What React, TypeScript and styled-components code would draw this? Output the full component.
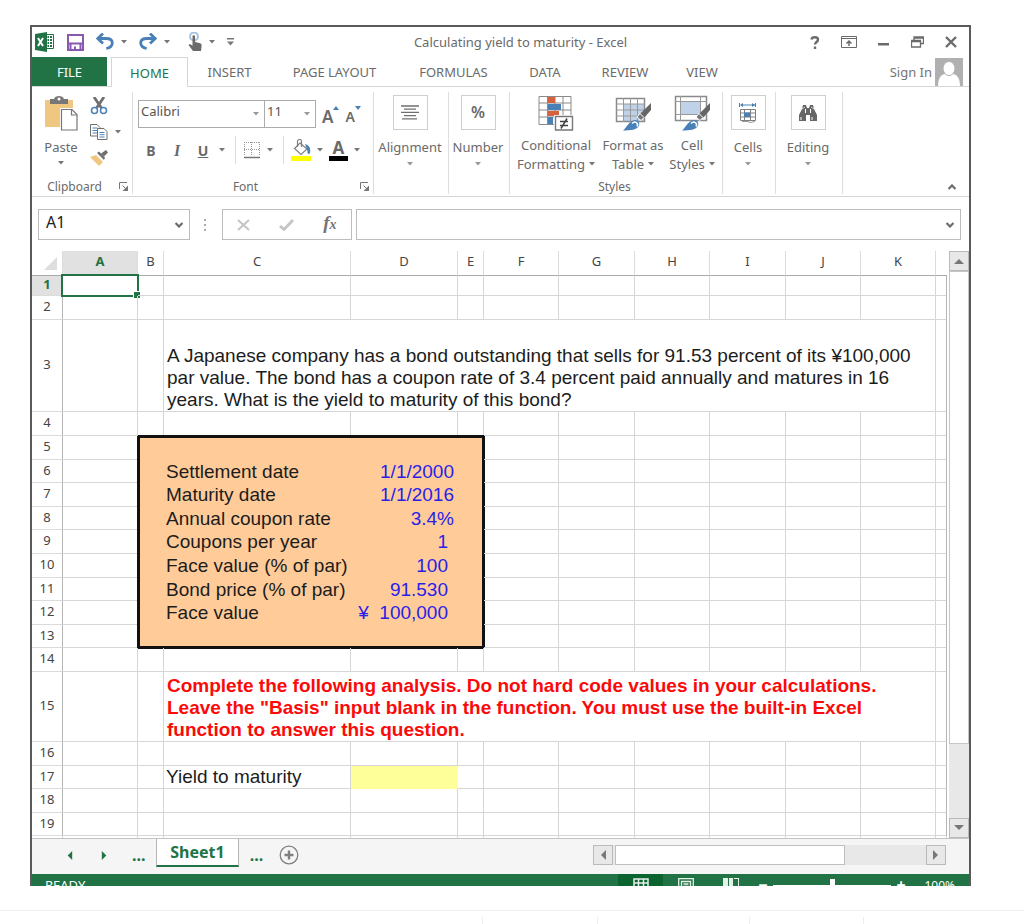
import React from "react";
import styled, { createGlobalStyle, css } from "styled-components";

const green = "#217346";
const ui = '"Noto Sans", "Open Sans", sans-serif';
const line = "#d6d6d6";
const grey = "#6a6a6a";

const GlobalStyle = createGlobalStyle`
  * { box-sizing: border-box; }
  body { margin: 0; background: #fff; font-family: ${ui}; font-size: 13px; color: ${grey}; }
  button { font: inherit; color: inherit; background: none; border: 0; padding: 0; margin: 0; cursor: pointer; }
  input, select { font: inherit; margin: 0; border-radius: 0; }
  svg { display: block; flex: none; }
`;

const Page = styled.div`
  padding-top: 25px;
`;

const Window = styled.main`
  margin: 0 53px 0 30px;
  border: 2px solid #5a5a5a;
  border-bottom: 0;
  overflow: hidden;
`;

/* ---------- title bar ---------- */

const TitleBar = styled.header`
  display: flex;
  align-items: center;
  height: 30px;
`;

const QuickAccess = styled.div`
  display: flex;
  align-items: center;
  gap: 12px;
  width: 340px;
  padding-left: 3px;
`;

const Split = styled.div`
  display: flex;
  align-items: center;
  gap: 7px;
`;

const Title = styled.h1`
  flex: 1;
  margin: 0;
  font-size: 13px;
  font-weight: 400;
  text-align: center;
  white-space: nowrap;
`;

const WindowControls = styled.div`
  display: flex;
  justify-content: flex-end;
  width: 300px;
  padding-right: 1px;
`;

const ControlButton = styled.button`
  display: flex;
  align-items: center;
  justify-content: center;
  width: 34px;
  height: 30px;
`;

/* ---------- tabs ---------- */

const TabRow = styled.nav`
  display: flex;
  height: 30px;
  border-bottom: 1px solid ${line};
`;

const FileTab = styled.button`
  width: 75px;
  margin-right: 4px;
  background: ${green};
  color: #fff;
`;

const Tab = styled.button<{ $width: number; $active?: boolean }>`
  width: ${(p) => p.$width}px;
  height: 30px;
  white-space: nowrap;
  ${(p) =>
    p.$active &&
    css`
      background: #fff;
      color: ${green};
      border: 1px solid ${line};
      border-bottom: 0;
    `}
`;

const SignIn = styled.button`
  display: flex;
  align-items: center;
  gap: 3px;
  height: 29px;
  margin-left: auto;
  padding-right: 6px;
  color: #757575;
`;

/* ---------- ribbon ---------- */

const Ribbon = styled.section`
  display: flex;
  height: 110px;
  padding: 5px 0 2px;
  border-bottom: 1px solid ${line};
`;

const Group = styled.div<{ $width: number }>`
  display: flex;
  flex-direction: column;
  width: ${(p) => p.$width}px;
  border-right: 1px solid #dedede;
`;

const GroupBody = styled.div`
  display: flex;
  flex: 1;
`;

const GroupFooter = styled.div`
  display: flex;
  align-items: center;
  gap: 2px;
  height: 14px;
  padding-right: 3px;
  font-size: 12px;
  line-height: 14px;
`;

const GroupName = styled.span`
  flex: 1;
  text-align: center;
`;

const PasteButton = styled.button`
  display: flex;
  flex-direction: column;
  align-items: center;
  width: 58px;
  padding-top: 4px;
  line-height: 19px;
`;

const PasteLabel = styled.span`
  padding: 6px 0 4px;
`;

const SmallTools = styled.div`
  display: flex;
  flex-direction: column;
  gap: 8px;
  padding-top: 5px;
`;

const FontTools = styled.div`
  display: flex;
  flex-direction: column;
  gap: 10px;
  flex: 1;
  padding: 8px 0 0 5px;
`;

const ToolRow = styled.div`
  display: flex;
  align-items: center;
  height: 28px;
`;

const FormatRow = styled(ToolRow)`
  height: 24px;
`;

const SelectWrap = styled.span<{ $width: number }>`
  position: relative;
  width: ${(p) => p.$width}px;
  & + & { margin-left: -1px; }
  svg { position: absolute; right: 6px; top: 12px; pointer-events: none; }
`;

const Select = styled.select`
  appearance: none;
  width: 100%;
  height: 28px;
  padding: 0 2px 6px;
  border: 1px solid #ababab;
  background: #fff;
  color: #555;
`;

const SizeButton = styled.button<{ $size: number }>`
  display: flex;
  align-items: flex-start;
  height: 28px;
  margin-left: 6px;
  padding-top: 6px;
  font-size: ${(p) => p.$size}px;
  font-weight: 600;
  line-height: 22px;
`;

const LetterButton = styled.button`
  width: 26px;
  height: 24px;
  font-size: 14px;
  font-weight: 700;
`;

const SerifItalic = styled.i`
  font-family: "Liberation Serif", serif;
  font-size: 16px;
`;

const ColourTool = styled.div`
  display: flex;
  align-items: center;
  gap: 6px;
  padding-right: 6px;
`;

const Divider = styled.span`
  width: 1px;
  height: 28px;
  margin: 0 7px 0 4px;
  background: #dcdcdc;
`;

const CaretButton = styled.button`
  padding: 0 6px 0 3px;
`;

const FontColour = styled.span`
  display: block;
  width: 19px;
  height: 22px;
  border-bottom: 5px solid #000;
  font-size: 17px;
  font-weight: 700;
  line-height: 17px;
`;

const BoxButton = styled.button`
  display: flex;
  flex-direction: column;
  align-items: center;
  width: 100%;
  padding: 3px 2px 0 0;
  line-height: 19px;
`;

const IconBox = styled.span`
  display: flex;
  align-items: center;
  justify-content: center;
  width: 35px;
  height: 35px;
  border: 1px solid #cfcfcf;
`;

const BoxLabel = styled.span`
  padding: 8px 0 5px;
`;

const StyleButton = styled.button<{ $width: number }>`
  display: flex;
  flex-direction: column;
  align-items: center;
  gap: 5px;
  align-self: flex-start;
  width: ${(p) => p.$width}px;
  padding-top: 3px;
  line-height: 19px;
  white-space: nowrap;
`;

const InlineCaret = styled.span`
  display: inline-block;
  padding: 0 0 4px 4px;
  vertical-align: middle;
`;

const CollapseButton = styled.button`
  align-self: flex-end;
  margin-left: auto;
  padding: 0 13px 4px;
`;

/* ---------- formula bar ---------- */

const FormulaRow = styled.section`
  display: flex;
  align-items: center;
  height: 54px;
  padding: 1px 8px 0 6px;
`;

const Field = styled.div<{ $width?: number }>`
  display: flex;
  align-items: center;
  height: 31px;
  border: 1px solid #bdbdbd;
  padding-right: 6px;
  ${(p) => (p.$width ? css`width: ${p.$width}px;` : css`flex: 1;`)}
`;

const FieldInput = styled.input`
  flex: 1;
  align-self: flex-start;
  min-width: 0;
  height: 24px;
  padding: 0 7px;
  border: 0;
  outline: 0;
  background: transparent;
  color: #222;
  font-size: 16px;
`;

const Grip = styled.span`
  display: grid;
  gap: 3px;
  margin: 0 16px 0 14px;
`;

const Dot = styled.i`
  width: 2px;
  height: 2px;
  background: #aaa;
`;

const FormulaButtons = styled.div`
  display: flex;
  align-items: center;
  justify-content: space-around;
  width: 130px;
  height: 31px;
  margin-right: 4px;
  border: 1px solid #bdbdbd;
`;

const Fx = styled.span`
  display: block;
  padding-bottom: 2px;
  font: italic 700 19px/20px "Liberation Serif", serif;
  color: #757575;
  small { font-size: 14px; }
`;

/* ---------- grid ---------- */

const SheetArea = styled.section`
  display: flex;
  gap: 2px;
`;

const Grid = styled.table`
  flex: 1;
  width: 0;
  table-layout: fixed;
  border-collapse: separate;
  border-spacing: 0;
`;

const ColHead = styled.th<{ $active?: boolean }>`
  height: 25px;
  padding: 0 0 4px;
  border-right: 1px solid #dcdcdc;
  border-bottom: 1px solid #ababab;
  color: #444;
  font-weight: 400;
  line-height: 20px;
  &:last-child { border-right: 0; }
  ${(p) => p.$active && css`background: #e1e1e1; color: ${green}; font-weight: 700;`}
`;

const Corner = styled.td`
  padding: 0 5px 5px 0;
  border-right: 1px solid #dcdcdc;
  border-bottom: 1px solid #ababab;
  vertical-align: bottom;
  svg { margin-left: auto; }
`;

const Row = styled.tr<{ $height: number }>`
  height: ${(p) => p.$height}px;
`;

const RowHead = styled.th<{ $active?: boolean }>`
  padding: 0 0 3px;
  border-right: 1px solid #b5b5b5;
  border-bottom: 1px solid #dcdcdc;
  color: #444;
  font-size: 13px;
  font-weight: 400;
  line-height: 16px;
  ${(p) => p.$active && css`background: #e1e1e1; color: ${green}; font-weight: 700;`}
`;

type Edge = "top" | "right" | "bottom" | "left";
const edgeShadow: Record<Edge, string> = {
  top: "inset 0 2px #111, 0 -1px #111",
  right: "inset -2px 0 #111, 1px 0 #111",
  bottom: "inset 0 -2px #111, 0 1px #111",
  left: "inset 2px 0 #111, -1px 0 #111",
};

const Cell = styled.td<{ $fill?: string; $edges?: Edge[]; $kind?: string }>`
  position: relative;
  padding: 0 0 0 2px;
  border-right: 1px solid ${line};
  border-bottom: 1px solid ${line};
  color: #1c1c1c;
  font-family: "Liberation Sans", Arial, sans-serif;
  font-size: 19px;
  line-height: 22px;
  white-space: nowrap;
  &:last-child { border-right-color: #b5b5b5; }
  ${(p) => p.$fill && css`background: ${p.$fill}; border: 0;`}
  ${(p) => p.$edges && p.$edges.length > 0 && css`box-shadow: ${p.$edges.map((e) => edgeShadow[e]).join(", ")};`}
  ${(p) => p.$kind === "value" && css`padding-right: 4px; text-align: right; color: #2a1fe8;`}
  ${(p) => p.$kind === "money" && css`padding-right: 10px; text-align: right; color: #2a1fe8;`}
  ${(p) => p.$kind === "note" && css`padding-left: 3px; vertical-align: bottom;`}
  ${(p) => p.$kind === "alert" && css`padding-left: 3px; vertical-align: bottom; color: #fb0a0a; font-weight: 700;`}
`;

const Selection = styled.span`
  position: absolute;
  inset: -2px;
  border: 2px solid ${green};
  &::after {
    content: "";
    position: absolute;
    right: -3px;
    bottom: -3px;
    width: 6px;
    height: 6px;
    background: ${green};
    border: solid #fff;
    border-width: 1px 0 0 1px;
  }
`;

const EdgeCell = styled.td`
  height: 2px;
  padding: 0;
  border-right: 1px solid ${line};
`;

const VScroll = styled.div`
  display: flex;
  flex-direction: column;
  width: 20px;
  background: #e8e8e8;
`;

const ScrollButton = styled.button`
  display: flex;
  align-items: center;
  justify-content: center;
  flex: none;
  width: 20px;
  height: 20px;
  border: 1px solid #bababa;
  background: #e8e8e8;
`;

const VThumb = styled.div`
  flex: 472;
  border: 1px solid #c6c6c6;
  background: #fff;
`;

const Track = styled.div<{ $share: number }>`
  flex: ${(p) => p.$share};
`;

/* ---------- sheet tabs and status ---------- */

const SheetBar = styled.footer`
  display: flex;
  align-items: flex-start;
  height: 36px;
  padding-right: 23px;
  border-top: 1px solid #c4c4c4;
  background: #f5f5f5;
`;

const SheetNav = styled.button`
  display: flex;
  align-items: center;
  justify-content: center;
  width: 35px;
  height: 32px;
`;

const NavGroup = styled.div`
  display: flex;
  width: 124px;
  padding-left: 20px;
`;

const More = styled(SheetNav)`
  color: ${green};
  font-size: 16px;
  font-weight: 700;
`;

const SheetTab = styled.button`
  width: 83px;
  height: 28px;
  border: solid #b5b5b5;
  border-width: 0 1px;
  border-bottom: 2px solid ${green};
  background: #fff;
  color: ${green};
  font-size: 16px;
  font-weight: 700;
  line-height: 26px;
`;

const AddSheet = styled(SheetNav)`
  width: 29px;
`;

const HScroll = styled.div`
  display: flex;
  width: 353px;
  height: 20px;
  margin: 6px 0 0 auto;
  background: #e8e8e8;
`;

const HThumb = styled.div`
  flex: 229;
  margin-left: 2px;
  border: 1px solid #c0c0c0;
  background: #fff;
`;

const StatusBar = styled.div`
  display: flex;
  align-items: flex-start;
  height: 12px;
  overflow: hidden;
  padding: 0 14px 0 13px;
  background: ${green};
  color: #fff;
  line-height: 23px;
`;

const StatusTools = styled.div`
  display: flex;
  margin-left: auto;
`;

const ViewButton = styled.button<{ $active?: boolean }>`
  display: flex;
  justify-content: center;
  width: 45px;
  height: 23px;
  padding-top: 4px;
  background: ${(p) => (p.$active ? "#0b6330" : "transparent")};
`;

const ZoomButton = styled.button`
  width: 20px;
  height: 23px;
  font-size: 16px;
  font-weight: 700;
`;

const Zoom = styled.input`
  appearance: none;
  width: 118px;
  height: 23px;
  background: transparent;
  &::-webkit-slider-runnable-track { height: 2px; background: #fff; }
  &::-webkit-slider-thumb {
    appearance: none;
    width: 5px;
    height: 13px;
    margin-top: -6px;
    background: #fff;
  }
`;

const ZoomValue = styled.output`
  width: 44px;
  font-size: 12px;
  text-align: right;
`;

const PageFooter = styled.div`
  display: flex;
  margin-top: 24px;
  padding-top: 6px;
  border-top: 1px solid #f0f0f0;
`;

const FooterSlot = styled.div<{ $width: number }>`
  width: ${(p) => p.$width}px;
  height: 7px;
  border-right: 1px solid #eee;
`;

/* ---------- drawings ---------- */

const Caret = ({ color = "#777" }: { color?: string }) => (
  <svg width="6" height="4" viewBox="0 0 6 4"><path d="M0 0h6L3 3.600z" fill={color} /></svg>
);

const Arrow = ({ dir, color = "#777", size = 10 }: { dir: "up" | "down" | "left" | "right"; color?: string; size?: number }) => {
  const d = { up: "M0 8h10L5 3z", down: "M0 2h10L5 7z", left: "M8 0v10L3 5z", right: "M2 0v10l5-5z" }[dir];
  return <svg width={size} height={size} viewBox="0 0 10 10"><path d={d} fill={color} /></svg>;
};

const Launcher = () => (
  <svg width="10" height="10" viewBox="0 0 10 10" fill="none" stroke="#777">
    <path d="M.5 7V.5H8" /><path d="M3.500 3.500l4 4" /><path d="M9 3.500V9H3.500z" fill="#777" stroke="none" />
  </svg>
);

const ExcelLogo = () => (
  <svg width="20" height="20" viewBox="0 0 20 20">
    <path d="M11 2.500h7.500v14H11" fill="#fff" stroke={green} />
    <path d="M12.500 5H14m1 0h2M12.500 8H14m1 0h2M12.500 11H14m1 0h2M12.500 14H14m1 0h2" stroke={green} strokeWidth="2" />
    <path d="M0 2l12-2v20L0 18z" fill={green} />
    <path d="M3 6l5 8M8 6l-5 8" stroke="#fff" strokeWidth="2" />
  </svg>
);

const SaveIcon = () => (
  <svg width="17" height="17" viewBox="0 0 17 17" fill="none" stroke="#8a58ae" strokeWidth="2">
    <path d="M1 1h15v15H1z" /><path d="M2 9.500h13" /><path d="M3.500 10v6M13.500 10v6" /><path d="M7 12.500h2V16H7z" fill="#8a58ae" stroke="none" />
  </svg>
);

const Undo = ({ flip }: { flip?: boolean }) => (
  <svg width="18" height="18" viewBox="0 0 18 18" fill="none" stroke="#4a80b8" strokeWidth="2.800">
    <g transform={flip ? "translate(18 0) scale(-1 1)" : undefined}>
      <path d="M7 .5L1.800 5.500 7 10.500" /><path d="M2.500 5.500H10c4 0 6.300 1.800 6.300 4.500 0 2.800-2.500 4.800-6 5.500" />
    </g>
  </svg>
);

const TouchIcon = () => (
  <svg width="20" height="20" viewBox="0 0 20 20">
    <circle cx="12" cy="4.500" r="4" fill="none" stroke="#a9c3de" strokeWidth="2" />
    <path d="M10.500 4.500a1.300 1.300 0 012.600 0V10l5 1.200c1.300.4 1.700 1.200 1.500 2.500L19 19h-8l-4.500-6 1.500-1 2.500 1.800z" fill="#6a6a6a" />
  </svg>
);

const PasteIcon = () => (
  <svg width="34" height="36" viewBox="0 0 34 36">
    <path d="M1 4h28v27H1z" fill="#efc780" />
    <path d="M6 8V3h4c1-4 9-4 10 0h4v5z" fill="#777" /><circle cx="15" cy="3" r="1.500" fill="#fff" />
    <path d="M16 12h13l5 6v17H16z" fill="#fff" /><path d="M17.500 13.500H28l5 5V34H17.500z" fill="#fff" stroke="#777" strokeWidth="1.200" /><path d="M27.500 13.500V19H33" fill="none" stroke="#777" strokeWidth="1.200" />
  </svg>
);

const CutIcon = () => (
  <svg width="18" height="18" viewBox="0 0 18 18" fill="none">
    <path d="M4 0l7.500 11M14 0L6.500 11" stroke="#707070" strokeWidth="2.800" />
    <circle cx="4.500" cy="13.500" r="3" stroke="#4a80b8" strokeWidth="1.500" /><circle cx="13.500" cy="13.500" r="3" stroke="#4a80b8" strokeWidth="1.500" />
  </svg>
);

const CopyIcon = () => (
  <svg width="18" height="18" viewBox="0 0 18 18" fill="#fff" stroke="#6f6f6f">
    <path d="M.5 1.500H7l3 3v8.500H.5z" /><path d="M2.500 5h5m-5 2.500h5m-5 2.500h5" stroke="#4a80b8" />
    <path d="M7.500 5.500H14l3 3v8H7.500z" /><path d="M9.500 9.500h5m-5 2.200h5m-5 2.300h5" stroke="#4a80b8" />
  </svg>
);

const BrushIcon = () => (
  <svg width="18" height="18" viewBox="0 0 18 18">
    <path d="M0 8l6-2 7 7-4 4z" fill="#efc780" /><path d="M7 4l2-1.500 6 6L14 11z" fill="#707070" /><path d="M11 4.500L16 1l2 2.500-4 4z" fill="#707070" />
  </svg>
);

const BordersIcon = () => (
  <svg width="18" height="18" viewBox="0 0 18 18" fill="none" stroke="#999">
    <path d="M1 1.500h16M1 8.500h16M1.500 1v14M8.500 1v14M16.500 1v14" strokeDasharray="1 1" /><path d="M1 16.500h16" stroke="#777" strokeWidth="1.500" />
  </svg>
);

const BucketIcon = () => (
  <svg width="20" height="22" viewBox="0 0 20 22">
    <path d="M0 17h20v5H0z" fill="#ff0" />
    <path d="M9 4l7 6-6 5.500L3.500 9.500z" fill="#fff" stroke="#808080" strokeWidth="1.200" /><path d="M6.500 8V2.500a2 2 0 014 0V8" fill="none" stroke="#808080" strokeWidth="1.200" />
    <path d="M14 5c4 1 6 4 5 9-1 2-3 1-2.500-2z" fill="#4a80b8" />
  </svg>
);

const AlignIcon = () => (
  <svg width="18" height="15" viewBox="0 0 18 15" stroke="#707070" strokeWidth="1.300"><path d="M0 1h18M3 4.200h12M0 7.400h18M3 10.600h12M1 13.800h15" /></svg>
);

const PercentMark = styled.span`
  font-size: 16px;
  font-weight: 600;
`;

const ConditionalIcon = () => (
  <svg width="36" height="36" viewBox="0 0 36 36" fill="none" stroke="#8a8a8a">
    <path d="M1 1.500h32v28H1zM1 8h32M1 15h32M1 22h32M9.500 1v28M17 1v28M25 1v28" />
    <path d="M10 2h7v6h-7zM10 16h11v5H10z" fill="#d5613f" stroke="none" /><path d="M10 9h13v6H10zM10 22h5v7h-5z" fill="#4a80b8" stroke="none" />
    <path d="M16 20h20v16H16z" fill="#fff" stroke="none" /><path d="M17.500 21.500h17v13.500h-17z" fill="#fff" stroke="#777" strokeWidth="1.400" />
    <path d="M22 26.500h8M22 30.500h8M29 23.500l-6 10" stroke="#444" strokeWidth="1.500" />
  </svg>
);

const Brush = () => (
  <>
    <path d="M36 8v7l-7 8-4-4z" fill="#666" /><path d="M25 18.500l4 4-3 3-4-3.500z" fill="#777" stroke="#fff" />
    <path d="M20 25c3.500 0 5 3 4 5.500C22 35 16 35.500 8 35.500c4-3 5-9 12-10.500z" fill="#4a80b8" /><path d="M17 28.500c3-3 7-.5 5 3" stroke="#fff" strokeWidth="1.500" fill="none" />
  </>
);

const TableIcon = () => (
  <svg width="36" height="36" viewBox="0 0 36 36">
    <path d="M9 9h20v18H9z" fill="#bfd2e8" /><path d="M1.500 3.500h28v23h-28z" fill="none" stroke="#8a8a8a" strokeWidth="1.500" />
    <path d="M1 9h29M1 15h29M1 21h29M8.500 3v24M15.500 3v24M22.500 3v24" stroke="#999" /><Brush />
  </svg>
);

const CellStyleIcon = () => (
  <svg width="36" height="36" viewBox="0 0 36 36">
    <path d="M7 7h20v12H7z" fill="#bfd2e8" /><path d="M1.500 1.500h31v24h-31z" fill="none" stroke="#8a8a8a" strokeWidth="1.500" />
    <path d="M1 6.500h32M1 19.500h32M6.500 1v25M26.500 1v25" stroke="#999" /><Brush />
  </svg>
);

const CellsIcon = () => (
  <svg width="18" height="20" viewBox="0 0 18 20" fill="none">
    <path d="M.5 0v4M16.500 0v4M2 2h14" stroke="#4a80b8" /><path d="M1 2l3-2v4zM16 2l-3-2v4z" fill="#4a80b8" />
    <path d="M1.500 6.500h15v11h-15zM1.500 10h15M1.500 14h15M5.500 6v11M11.500 6v11" stroke="#808080" /><path d="M5 9.500h6v4.500H5z" fill="#4a80b8" /><path d="M3 18.500h6l2 1 5-1" stroke="#999" />
  </svg>
);

const BinocularsIcon = () => (
  <svg width="18" height="18" viewBox="0 0 18 18" fill="#666">
    <path d="M4 1h3l1 3h2l1-3h3l1 4 3 6v6h-7v-6H7v6H0v-6l3-6z" /><path d="M6.500 5v4M11.500 5v4M2 13v3M13 13v3" stroke="#fff" /><path d="M3 5l3-2M12 3l3 2" stroke="#fff" strokeWidth=".7" />
  </svg>
);

const AvatarIcon = () => (
  <svg width="28" height="28" viewBox="0 0 28 28">
    <path d="M0 0h28v28H0z" fill="#b0b0b0" /><path d="M3 28c0-9 4-12 7.500-12h7c3.500 0 7.500 3 7.500 12z" fill="#fff" /><ellipse cx="14" cy="10.500" rx="6" ry="7" fill="#fff" stroke="#b0b0b0" />
  </svg>
);

const Chevron = ({ up }: { up?: boolean }) => (
  <svg width="8" height="6" viewBox="0 0 8 6" fill="none" stroke="#6b6b6b" strokeWidth="2.200"><path d={up ? "M.5 5L4 1.500 7.500 5" : "M.5 1L4 4.500 7.500 1"} /></svg>
);

/* ---------- sheet data ---------- */

const columns: [string, number][] = [
  ["A", 75], ["B", 26], ["C", 187], ["D", 107], ["E", 26], ["F", 75],
  ["G", 76], ["H", 75], ["I", 76], ["J", 75], ["K", 75],
];

const rowHeights = [20, 24, 92, 24, 24, 23, 24, 23, 24, 24, 23, 24, 23, 24, 70, 24, 23, 24, 23];

const inputs: Record<number, [string, string, string]> = {
  6: ["Settlement date", "1/1/2000", "value"],
  7: ["Maturity date", "1/1/2016", "value"],
  8: ["Annual coupon rate", "3.4%", "value"],
  9: ["Coupons per year", "1", "money"],
  10: ["Face value (% of par)", "100", "money"],
  11: ["Bond price (% of par)", "91.530", "money"],
  12: ["Face value", "¥\u00a0 100,000", "money"],
};

const merged: Record<number, { kind: string; lines: string[] }> = {
  3: {
    kind: "note",
    lines: [
      "A Japanese company has a bond outstanding that sells for 91.53 percent of its ¥100,000",
      "par value. The bond has a coupon rate of 3.4 percent paid annually and matures in 16",
      "years. What is the yield to maturity of this bond?",
    ],
  },
  15: {
    kind: "alert",
    lines: [
      "Complete the following analysis. Do not hard code values in your calculations.",
      "Leave the \"Basis\" input blank in the function. You must use the built-in Excel",
      "function to answer this question.",
    ],
  },
};

function SheetRow({ n, height }: { n: number; height: number }) {
  const block = merged[n];
  const boxed = n >= 5 && n <= 13;
  return (
    <Row $height={height}>
      <RowHead scope="row" $active={n === 1}>{n}</RowHead>
      {columns.map(([name], i) => {
        if (block && i > 2) return null;
        if (block && i === 2) {
          return (
            <Cell key={name} colSpan={9} $kind={block.kind}>
              {block.lines.map((text) => <div key={text}>{text}</div>)}
            </Cell>
          );
        }
        if (boxed && i >= 1 && i <= 4) {
          const edges: Edge[] = [];
          if (n === 5) edges.push("top");
          if (n === 13) edges.push("bottom");
          if (name === "B") edges.push("left");
          if (name === "E") edges.push("right");
          const data = inputs[n];
          return (
            <Cell key={name} $fill="#ffcb99" $edges={edges} $kind={name === "D" && data ? data[2] : undefined}>
              {data && name === "C" && data[0]}
              {data && name === "D" && data[1]}
            </Cell>
          );
        }
        return (
          <Cell key={name} $fill={n === 17 && name === "D" ? "#ffff99" : undefined}>
            {n === 1 && name === "A" && <Selection />}
            {n === 17 && name === "C" && "Yield to maturity"}
          </Cell>
        );
      })}
      <Cell />
    </Row>
  );
}

function BoxGroup({ width, label, icon }: { width: number; label: string; icon: React.ReactNode }) {
  return (
    <Group $width={width}>
      <BoxButton><IconBox>{icon}</IconBox><BoxLabel>{label}</BoxLabel><Caret color="#999" /></BoxButton>
    </Group>
  );
}

export default function App() {
  return (
    <Page>
      <GlobalStyle />
      <Window>
        <TitleBar>
          <QuickAccess>
            <ExcelLogo />
            <button aria-label="Save"><SaveIcon /></button>
            <Split><button aria-label="Undo"><Undo /></button><button aria-label="Undo list"><Caret /></button></Split>
            <Split><button aria-label="Redo"><Undo flip /></button><button aria-label="Redo list"><Caret /></button></Split>
            <Split><button aria-label="Touch mode"><TouchIcon /></button><button aria-label="Touch mode list"><Caret /></button></Split>
            <button aria-label="Customize toolbar">
              <svg width="7" height="8" viewBox="0 0 7 8"><path d="M0 0h7v1.500H0zM0 3.500h7L3.500 7.500z" fill="#777" /></svg>
            </button>
          </QuickAccess>
          <Title>Calculating yield to maturity - Excel</Title>
          <WindowControls>
            <ControlButton aria-label="Help">
              <svg width="10" height="13" viewBox="0 0 10 13" fill="none" stroke="#6b6b6b" strokeWidth="2.400"><path d="M1.500 3.500C2 .5 8 .5 8 3.700 8 6 5 6 5 8.500M5 10.500V13" /></svg>
            </ControlButton>
            <ControlButton aria-label="Ribbon display options">
              <svg width="16" height="12" viewBox="0 0 16 12" fill="none" stroke="#6b6b6b"><path d="M.5.5h15v11H.5zM.5 2.500h15" /><path d="M8 10V5M5.500 7.500L8 5l2.500 2.500" strokeWidth="1.500" /></svg>
            </ControlButton>
            <ControlButton aria-label="Minimize">
              <svg width="11" height="12" viewBox="0 0 11 12"><path d="M0 7h11v2.500H0z" fill="#6b6b6b" /></svg>
            </ControlButton>
            <ControlButton aria-label="Restore">
              <svg width="13" height="12" viewBox="0 0 13 12" fill="none" stroke="#6b6b6b"><path d="M3 4V1h9.500v6.500H10M3 2h9" strokeWidth="1.300" /><path d="M.5 4.500h9v6.500h-9zM.5 5.500h9" strokeWidth="1.300" /></svg>
            </ControlButton>
            <ControlButton aria-label="Close">
              <svg width="12" height="12" viewBox="0 0 12 12" stroke="#6b6b6b" strokeWidth="2.400"><path d="M1 1l10 10M11 1L1 11" /></svg>
            </ControlButton>
          </WindowControls>
        </TitleBar>

        <TabRow>
          <FileTab>FILE</FileTab>
          <Tab $width={77} $active>HOME</Tab>
          <Tab $width={83}>INSERT</Tab>
          <Tab $width={127}>PAGE LAYOUT</Tab>
          <Tab $width={111}>FORMULAS</Tab>
          <Tab $width={72}>DATA</Tab>
          <Tab $width={88}>REVIEW</Tab>
          <Tab $width={66}>VIEW</Tab>
          <SignIn>Sign In <AvatarIcon /></SignIn>
        </TabRow>

        <Ribbon>
          <Group $width={101}>
            <GroupBody>
              <PasteButton><PasteIcon /><PasteLabel>Paste</PasteLabel><Caret /></PasteButton>
              <SmallTools>
                <button aria-label="Cut"><CutIcon /></button>
                <Split><button aria-label="Copy"><CopyIcon /></button><button aria-label="Copy list"><Caret /></button></Split>
                <button aria-label="Format painter"><BrushIcon /></button>
              </SmallTools>
            </GroupBody>
            <GroupFooter><GroupName>Clipboard</GroupName><button aria-label="Clipboard options"><Launcher /></button></GroupFooter>
          </Group>

          <Group $width={241}>
            <GroupBody>
              <FontTools>
                <ToolRow>
                  <SelectWrap $width={127}><Select aria-label="Font name"><option>Calibri</option></Select><Caret color="#999" /></SelectWrap>
                  <SelectWrap $width={52}><Select aria-label="Font size"><option>11</option></Select><Caret color="#999" /></SelectWrap>
                  <SizeButton $size={17} aria-label="Increase font size">A<svg width="6" height="4" viewBox="0 0 6 4"><path d="M0 4h6L3 0z" fill="#4a80b8" /></svg></SizeButton>
                  <SizeButton $size={14} aria-label="Decrease font size">A<svg width="6" height="4" viewBox="0 0 6 4"><path d="M0 0h6L3 4z" fill="#4a80b8" /></svg></SizeButton>
                </ToolRow>
                <FormatRow>
                  <LetterButton aria-label="Bold">B</LetterButton>
                  <LetterButton aria-label="Italic"><SerifItalic>I</SerifItalic></LetterButton>
                  <LetterButton aria-label="Underline"><u>U</u></LetterButton>
                  <CaretButton aria-label="Underline list"><Caret /></CaretButton>
                  <Divider />
                  <ColourTool><button aria-label="Borders"><BordersIcon /></button><button aria-label="Border list"><Caret /></button></ColourTool>
                  <Divider />
                  <ColourTool><button aria-label="Fill colour"><BucketIcon /></button><button aria-label="Fill colours"><Caret /></button></ColourTool>
                  <ColourTool><button aria-label="Font colour"><FontColour>A</FontColour></button><button aria-label="Font colours"><Caret /></button></ColourTool>
                </FormatRow>
              </FontTools>
            </GroupBody>
            <GroupFooter><GroupName>Font</GroupName><button aria-label="Font options"><Launcher /></button></GroupFooter>
          </Group>

          <BoxGroup width={75} label="Alignment" icon={<AlignIcon />} />
          <BoxGroup width={61} label="Number" icon={<PercentMark>%</PercentMark>} />

          <Group $width={213}>
            <GroupBody>
              <StyleButton $width={92}><ConditionalIcon /><span>Conditional<br />Formatting<InlineCaret><Caret /></InlineCaret></span></StyleButton>
              <StyleButton $width={62}><TableIcon /><span>Format as<br />Table<InlineCaret><Caret /></InlineCaret></span></StyleButton>
              <StyleButton $width={56}><CellStyleIcon /><span>Cell<br />Styles<InlineCaret><Caret /></InlineCaret></span></StyleButton>
            </GroupBody>
            <GroupFooter><GroupName>Styles</GroupName></GroupFooter>
          </Group>

          <BoxGroup width={53} label="Cells" icon={<CellsIcon />} />
          <BoxGroup width={67} label="Editing" icon={<BinocularsIcon />} />
          <CollapseButton aria-label="Collapse ribbon"><Chevron up /></CollapseButton>
        </Ribbon>

        <FormulaRow>
          <Field $width={152}>
            <FieldInput aria-label="Name box" defaultValue="A1" />
            <button aria-label="Named ranges"><Chevron /></button>
          </Field>
          <Grip><Dot /><Dot /><Dot /></Grip>
          <FormulaButtons>
            <button aria-label="Cancel"><svg width="13" height="12" viewBox="0 0 13 12" stroke="#c4c4c4" strokeWidth="2"><path d="M1 1l11 10M12 1L1 11" /></svg></button>
            <button aria-label="Enter"><svg width="15" height="12" viewBox="0 0 15 12" fill="none" stroke="#c4c4c4" strokeWidth="2.800"><path d="M1 7l4 3.500L14 1" /></svg></button>
            <button aria-label="Insert function"><Fx>f<small>x</small></Fx></button>
          </FormulaButtons>
          <Field>
            <FieldInput aria-label="Formula" />
            <button aria-label="Expand formula bar"><Chevron /></button>
          </Field>
        </FormulaRow>

        <SheetArea>
          <Grid>
            <colgroup>
              <col style={{ width: 31 }} />
              {columns.map(([name, width]) => <col key={name} style={{ width }} />)}
              <col />
            </colgroup>
            <thead>
              <tr>
                <Corner><svg width="13" height="13" viewBox="0 0 13 13"><path d="M13 0v13H0z" fill="#dedede" /></svg></Corner>
                {columns.map(([name]) => <ColHead key={name} scope="col" $active={name === "A"}>{name}</ColHead>)}
                <ColHead />
              </tr>
            </thead>
            <tbody>
              {rowHeights.map((height, i) => <SheetRow key={i} n={i + 1} height={height} />)}
              <tr>
                <EdgeCell />
                {columns.map(([name]) => <EdgeCell key={name} />)}
                <EdgeCell />
              </tr>
            </tbody>
          </Grid>
          <VScroll>
            <ScrollButton aria-label="Scroll up"><Arrow dir="up" /></ScrollButton>
            <VThumb />
            <Track $share={74} />
            <ScrollButton aria-label="Scroll down"><Arrow dir="down" /></ScrollButton>
          </VScroll>
        </SheetArea>

        <SheetBar>
          <NavGroup>
            <SheetNav aria-label="Previous sheet"><Arrow dir="left" color={green} size={9} /></SheetNav>
            <SheetNav aria-label="Next sheet"><Arrow dir="right" color={green} size={9} /></SheetNav>
            <More aria-label="Sheets to the left">...</More>
          </NavGroup>
          <SheetTab>Sheet1</SheetTab>
          <More aria-label="Sheets to the right">...</More>
          <AddSheet aria-label="New sheet">
            <svg width="20" height="20" viewBox="0 0 20 20" fill="none" stroke="#808080"><circle cx="10" cy="10" r="8.800" strokeWidth="1.300" /><path d="M10 5.500v9M5.500 10h9" strokeWidth="2.400" /></svg>
          </AddSheet>
          <HScroll>
            <ScrollButton aria-label="Scroll left"><Arrow dir="left" /></ScrollButton>
            <HThumb />
            <Track $share={82} />
            <ScrollButton aria-label="Scroll right"><Arrow dir="right" /></ScrollButton>
          </HScroll>
        </SheetBar>

        <StatusBar>
          <span>READY</span>
          <StatusTools>
            <ViewButton $active aria-label="Normal view"><svg width="16" height="14" viewBox="0 0 16 14" fill="none" stroke="#e5f0e9" strokeWidth="1.500"><path d="M1 1h14v12H1zM1 5h14M1 9h14M5.500 1v12M10.500 1v12" /></svg></ViewButton>
            <ViewButton aria-label="Page layout view"><svg width="16" height="14" viewBox="0 0 16 14" fill="none" stroke="#e5f0e9" strokeWidth="1.300"><path d="M.7.700h14.600v12.600H.7zM3.500 3.500h9v10h-9zM5.500 6h5M5.500 8.500h5" /></svg></ViewButton>
            <ViewButton aria-label="Page break view"><svg width="16" height="14" viewBox="0 0 16 14" fill="#e5f0e9"><path d="M0 0h5v14H0zM6 0h4v14H6zM11 0h5v14h-1V1h-4z" /></svg></ViewButton>
            <ZoomButton aria-label="Zoom out">−</ZoomButton>
            <Zoom type="range" aria-label="Zoom" min={0} max={200} defaultValue={100} />
            <ZoomButton aria-label="Zoom in">+</ZoomButton>
            <ZoomValue>100%</ZoomValue>
          </StatusTools>
        </StatusBar>
      </Window>
      <PageFooter>
        <FooterSlot $width={483} />
        <FooterSlot $width={115} />
        <FooterSlot $width={152} />
        <FooterSlot $width={114} />
      </PageFooter>
    </Page>
  );
}
